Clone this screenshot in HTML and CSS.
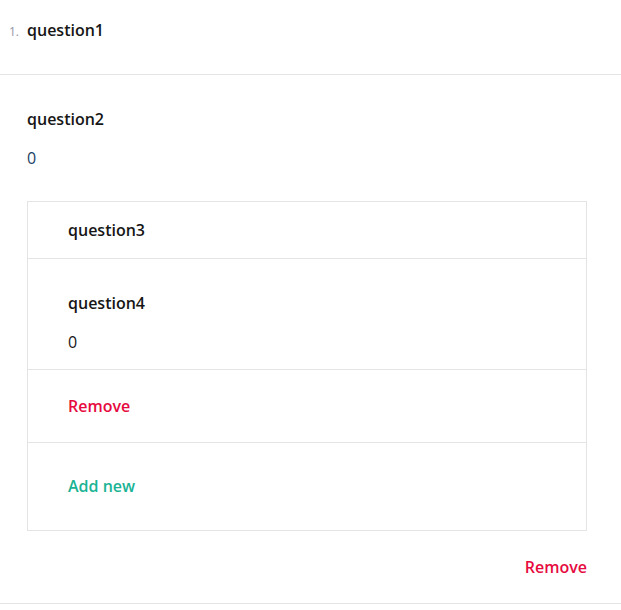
FILE: index.html
```html
<!DOCTYPE html>
<html lang="en">
<head>
<meta charset="utf-8">
<title>Dynamic panel</title>
<link rel="stylesheet" href="styles.css">
</head>
<body>
  <div class="question top">
    <div class="title-row">
      <span class="num">1.</span>
      <span class="title">question1</span>
    </div>
  </div>
  <div class="question dynamic">
    <div class="title">question2</div>
    <div class="value blue">0</div>
    <div class="panel">
      <div class="row r3"><div class="title">question3</div></div>
      <div class="row r4">
        <div class="title">question4</div>
        <div class="value">0</div>
      </div>
      <div class="row rremove"><span class="btn red">Remove</span></div>
      <div class="row radd"><span class="btn green">Add new</span></div>
    </div>
    <div class="footer"><span class="btn red">Remove</span></div>
  </div>
</body>
</html>
```

FILE: styles.css
```css
html, body {
  margin: 0;
  padding: 0;
  background: #ffffff;
}
body {
  font-family: "Open Sans", "Liberation Sans", sans-serif;
  font-size: 16px;
  line-height: 24px;
  color: #161616;
  width: 621px;
}
.question {
  border-bottom: 1px solid #e4e4e4;
}
.top {
  padding: 18px 0 32px 0;
}
.title-row {
  display: flex;
  align-items: baseline;
  height: 24px;
}
.num {
  flex: 0 0 27px;
  padding-left: 9px;
  box-sizing: border-box;
  font-size: 12px;
  line-height: 16px;
  color: #9494a8;
}
.title {
  font-weight: 600;
}
.dynamic {
  padding: 32px 34px 24px 27px;
}
.value {
  margin-top: 15px;
}
.value.blue {
  color: #1a3f66;
}
.panel {
  margin-top: 31px;
  border: 1px solid #e4e4e4;
}
.row {
  padding: 0 40px;
  border-bottom: 1px solid #e4e4e4;
}
.row:last-child {
  border-bottom: none;
}
.r3 {
  padding-top: 16px;
  padding-bottom: 16px;
}
.r4 {
  padding-top: 32px;
  padding-bottom: 15px;
}
.rremove {
  padding-top: 24px;
  padding-bottom: 24px;
}
.radd {
  padding-top: 31px;
  padding-bottom: 32px;
}
.btn {
  font-weight: 600;
}
.red {
  color: #e60a3e;
}
.green {
  color: #19b394;
}
.footer {
  margin-top: 24px;
  display: flex;
  justify-content: flex-end;
}
```
